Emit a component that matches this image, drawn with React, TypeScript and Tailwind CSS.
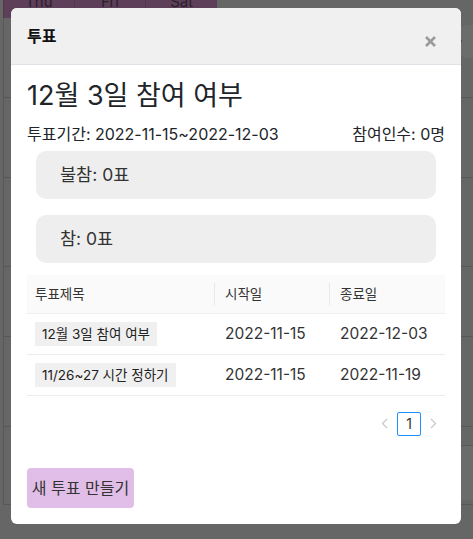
import React from "react"

const font = { fontFamily: 'Inter, "Noto Sans CJK KR", sans-serif' }

const votes = [
  { title: "12월 3일 참여 여부", start: "2022-11-15", end: "2022-12-03" },
  { title: "11/26~27 시간 정하기", start: "2022-11-15", end: "2022-11-19" },
]

const Background = () => {
  return (
    <div className="absolute inset-0 overflow-hidden bg-[#666666]">
      <div className="-mt-[6px] ml-[3px] flex h-[24px] w-[214px] border-l border-[#4f3a4c] bg-[#5d3f59] text-[15px] leading-[15px] text-[#2b2029]">
        <div className="flex w-[71px] justify-center border-r border-[#4f3a4c]">Thu</div>
        <div className="flex w-[72px] justify-center border-r border-[#4f3a4c]">Fri</div>
        <div className="flex w-[71px] justify-center">Sat</div>
      </div>
      <div className="ml-[3px] flex flex-col border-l border-[#585858]">
        <div className="h-[80px] border-b border-[#585858]" />
        <div className="h-[80px] border-b border-[#585858]" />
        <div className="h-[89px] border-b border-[#585858]" />
        <div className="h-[70px] border-b border-[#585858]" />
        <div className="h-[90px] border-b border-[#585858]" />
        <div className="h-[78px] border-b border-[#585858]" />
      </div>
      <div className="absolute right-[-20px] top-[25px] flex h-[33px] w-[40px] items-center rounded-full bg-[#6c6c6c] pl-[3px]">
        <svg width="6" height="4" viewBox="0 0 6 4">
          <path d="M0.5 0.5 L3 3 L5.5 0.5" fill="none" stroke="#2a2a2a" strokeWidth="1.2" />
        </svg>
      </div>
      <div className="absolute right-0 top-[445px] h-[55px] w-[12px] border-t border-[#595959] bg-[#6b6b6b]" />
    </div>
  )
}

const App = () => {
  return (
    <div className="relative h-[539px] w-[473px] overflow-hidden text-[#212529]" style={font}>
      <Background />
      <div className="absolute inset-0 pl-[11px] pt-[8px]">
        <div className="flex h-[516px] w-[450px] flex-col rounded-md bg-white">
          <div className="flex h-[57px] shrink-0 items-center justify-between rounded-t-md border-b border-[#dee2e6] bg-[#f0f0f0] px-4">
            <span className="text-[16px] font-bold leading-[20px] text-[#111]">투표</span>
            <svg className="mr-[9px] mt-[10px]" width="11" height="11" viewBox="0 0 11 11">
              <path d="M1 1 L10 10 M10 1 L1 10" stroke="#9a9a9a" strokeWidth="2.6" />
            </svg>
          </div>
          <div className="flex flex-1 flex-col px-4 pt-[14px]">
            <h3 className="text-[27px] leading-[34px] text-[#212529]">12월 3일 참여 여부</h3>
            <div className="mt-[11px] flex items-center justify-between text-[16px] leading-[20px]">
              <span>투표기간: 2022-11-15~2022-12-03</span>
              <span>참여인수: 0명</span>
            </div>
            <div className="mx-[9px] mt-[7px] flex flex-col gap-4">
              <div className="flex h-[48px] items-center rounded-[10px] bg-[#eeeeee] px-6 text-[17.5px] leading-[22px] text-[#333]">불참: 0표</div>
              <div className="flex h-[48px] items-center rounded-[10px] bg-[#eeeeee] px-6 text-[17.5px] leading-[22px] text-[#333]">참: 0표</div>
            </div>
            <table className="mt-[12px] w-full border-collapse text-left text-[#333]">
              <thead>
                <tr className="h-[38px] border-b border-[#f0f0f0] bg-[#fafafa] text-[13.5px]">
                  <th className="relative w-[188px] px-2 font-normal">
                    투표제목
                    <span className="absolute right-0 top-1/2 h-[22px] w-px -translate-y-1/2 bg-[#e8e8e8]" />
                  </th>
                  <th className="relative w-[115px] px-2.5 font-normal">
                    시작일
                    <span className="absolute right-0 top-1/2 h-[22px] w-px -translate-y-1/2 bg-[#e8e8e8]" />
                  </th>
                  <th className="px-2.5 font-normal">종료일</th>
                </tr>
              </thead>
              <tbody>
                {votes.map((v) => (
                  <tr key={v.title} className="h-[41px] border-b border-[#ececec] text-[15.5px]">
                    <td className="px-2">
                      <span className="inline-block h-[24px] bg-[#f0f0f0] px-[7px] text-[13.5px] leading-[24px] text-[#222]">{v.title}</span>
                    </td>
                    <td className="px-2.5">{v.start}</td>
                    <td className="px-2.5">{v.end}</td>
                  </tr>
                ))}
              </tbody>
            </table>
            <div className="mt-[16px] flex items-center justify-end gap-[9px] pr-[8px]">
              <svg width="7" height="11" viewBox="0 0 7 11">
                <path d="M6 1 L1.5 5.5 L6 10" fill="none" stroke="#c8c8c8" strokeWidth="1.2" />
              </svg>
              <div className="flex h-[24px] w-[24px] items-center justify-center rounded-[2px] border border-[#1890ff] text-[14px] text-[#333]">1</div>
              <svg width="7" height="11" viewBox="0 0 7 11">
                <path d="M1 1 L5.5 5.5 L1 10" fill="none" stroke="#c8c8c8" strokeWidth="1.2" />
              </svg>
            </div>
            <div className="mt-[32px]">
              <button className="h-[40px] w-[107px] rounded-[4px] bg-[#e1bee7] text-[16px] text-[#333]">새 투표 만들기</button>
            </div>
          </div>
        </div>
      </div>
    </div>
  )
}

export default App
